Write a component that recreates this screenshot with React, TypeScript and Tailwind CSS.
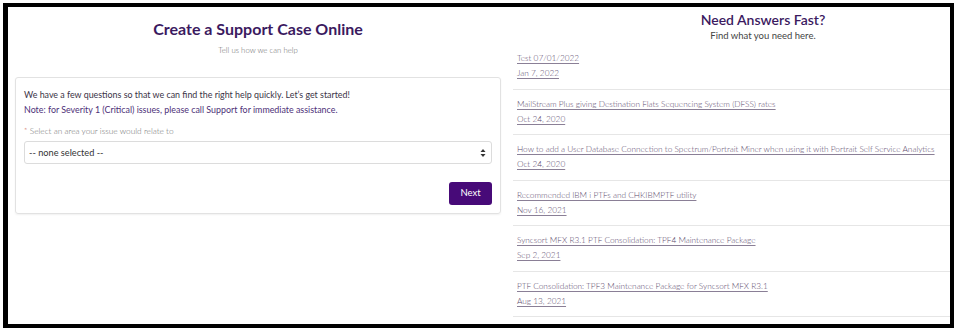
import React from "react";

const items = [
  { t: "Test 07/01/2022", d: "Jan 7, 2022" },
  { t: "MailStream Plus giving Destination Flats Sequencing System (DFSS) rates", d: "Oct 24, 2020" },
  { t: "How to add a User Database Connection to Spectrum/Portrait Miner when using it with Portrait Self Service Analytics", d: "Oct 24, 2020" },
  { t: "Recommended IBM i PTFs and CHKIBMPTF utility", d: "Nov 16, 2021" },
  { t: "Syncsort MFX R3.1 PTF Consolidation: TPF4 Maintenance Package", d: "Sep 2, 2021" },
  { t: "PTF Consolidation: TPF3 Maintenance Package for Syncsort MFX R3.1", d: "Aug 13, 2021" },
];

export default function App() {
  return (
    <div className="w-[959px] h-[330px] bg-white p-[3px]" style={{ fontFamily: "Lato, 'Open Sans', sans-serif" }}>
      <div className="w-[951px] h-[325px] border-black border-l-[5px] border-t-[4px] border-r-[4px] border-b-[4px] overflow-hidden flex bg-white">
        {/* Left column */}
        <div className="w-[500px] shrink-0 flex flex-col">
          <h1 className="mt-[11px] text-center text-[16px] leading-[22px] font-bold text-[#3b1a5f]">
            Create a Support Case Online
          </h1>
          <p className="mt-[5px] text-center text-[7.8px] leading-[10px] font-light text-[#6a6a6a]">
            Tell us how we can help
          </p>
          <div className="ml-[7px] mr-[7px] mt-[22px] h-[137px] border border-[#e2e2e2] rounded-[3px] shadow-[0_1px_2px_rgba(0,0,0,0.06)] px-[8px] pt-[9px]">
            <p className="text-[8.9px] leading-[15px] text-[#3a3346]">
              We have a few questions so that we can find the right help quickly. Let’s get started!
            </p>
            <p className="text-[8.9px] leading-[15px] text-[#4d2f78]">
              Note: for Severity 1 (Critical) issues, please call Support for immediate assistance.
            </p>
            <div className="mt-[8px] text-[8.3px] leading-[12px] text-[#707070] font-light">
              <span className="text-[#c23934]">*</span> Select an area your issue would relate to
            </div>
            <div className="mt-[4px] h-[23px] border border-[#dcdcdc] rounded-[3px] flex items-center justify-between pl-[4px] pr-[5px]">
              <span className="text-[9.2px] text-[#333]">-- none selected --</span>
              <svg width="6" height="10" viewBox="0 0 6 10">
                <path d="M3 1 L5.5 4 L0.5 4 Z" fill="#333" />
                <path d="M3 9 L5.5 6 L0.5 6 Z" fill="#333" />
              </svg>
            </div>
            <div className="mt-[18px] flex justify-end">
              <button className="w-[43px] h-[23px] bg-[#470a78] text-white text-[9.5px] rounded-[3px]">Next</button>
            </div>
          </div>
        </div>
        {/* Right column */}
        <div className="w-[500px] shrink-0 ml-[5px] flex flex-col">
          <h2 className="mt-[4px] text-center text-[14px] leading-[18px] font-semibold text-[#3b1a5f]">
            Need Answers Fast?
          </h2>
          <p className="mt-[1px] text-center text-[9.5px] leading-[12px] text-[#444]">Find what you need here.</p>
          <div className="mt-[2px] flex flex-col">
            {items.map((it, i) => (
              <div
                key={i}
                className={
                  (i % 2 === 0 ? "h-[46px]" : "h-[45px]") +
                  " pl-[4px] pt-[7px] border-b border-[#e6e6e6]"
                }
              >
                <div className="text-[8.25px] leading-[15px] font-light text-[#5b4a6c] underline underline-offset-[2px] decoration-[#8a7f96] whitespace-nowrap">
                  {it.t}
                </div>
                <div className="text-[8.25px] leading-[15px] font-light text-[#5b4a6c] underline underline-offset-[2px] decoration-[#8a7f96]">
                  {it.d}
                </div>
              </div>
            ))}
          </div>
        </div>
      </div>
    </div>
  );
}
